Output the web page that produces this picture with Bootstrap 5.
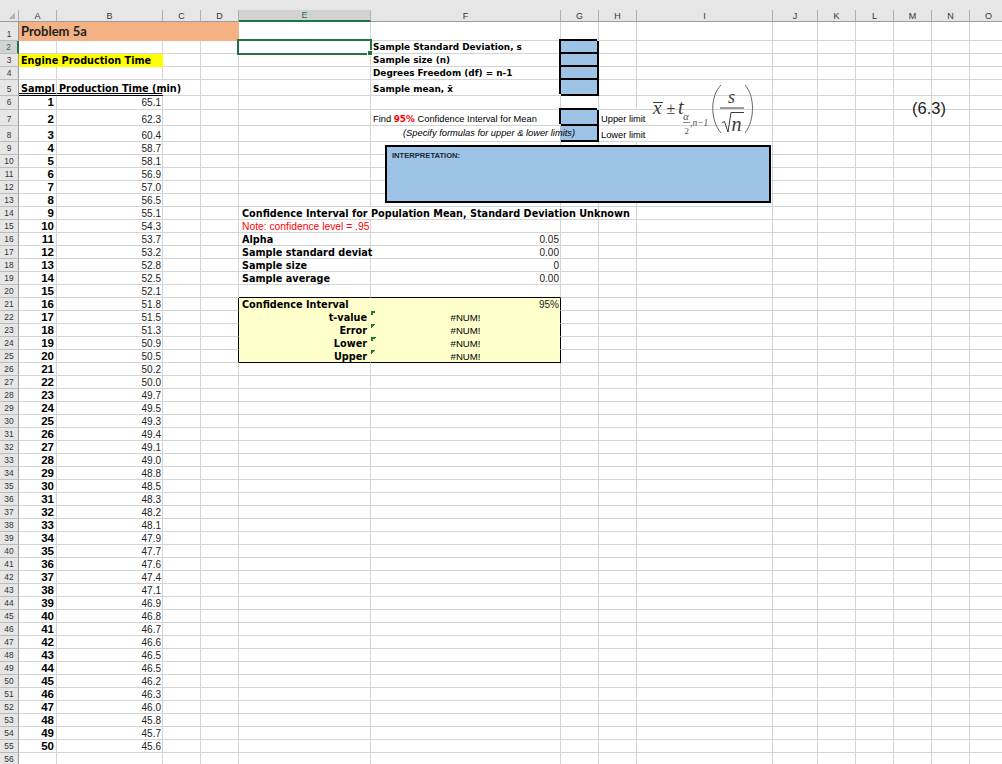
<!DOCTYPE html>
<html lang="en"><head><meta charset="utf-8"><title>Problem 5a</title>
<link rel="stylesheet" href="https://cdn.jsdelivr.net/npm/bootstrap@5.3.0/dist/css/bootstrap.min.css">
<style>
html,body{height:764px;overflow:hidden;background:#fff}
.sheet{width:1002px;height:764px;overflow:hidden;padding-top:10px;background:#e6e6e6}
table.xl.table{width:1007px;table-layout:fixed;border-collapse:separate;border-spacing:0;margin:0;background:#fff;border:0;color:#000;font-family:"Liberation Sans",Arial,sans-serif;font-size:10px}
table.xl.table>*>tr>*{padding:0;height:13px;line-height:11px;vertical-align:bottom;white-space:nowrap;overflow:visible;border-style:solid;border-width:0 1px 1px 0;border-color:#d4d4d4;background:transparent;box-shadow:none;color:#000}
table.xl.table>thead>tr>th{height:12px;padding:0;background:#e6e6e6;font-weight:400;font-size:9px;line-height:9px;text-align:center;color:#333;border-color:#b0b0b0;border-bottom-color:#9b9b9b}
table.xl.table>thead>tr>th.corner{background:linear-gradient(135deg,transparent 50%,#b4b4b4 50%) right 3px bottom 2px/6px 6px no-repeat #e6e6e6}
table.xl.table>thead>tr>th.cur{background:#d2d2d2;color:#217346;border-bottom:2px solid #217346}
table.xl.table>tbody>tr>th{background:#e6e6e6;font-weight:400;font-size:8.4px;line-height:11px;text-align:center;color:#333;border-color:#bcbcbc;border-right-color:#9b9b9b}
table.xl.table>tbody>tr>th.cur{background:#d2d2d2;color:#217346;border-right:2px solid #217346}
table.xl.table>tbody>tr.h19>*{height:19px}
table.xl.table>tbody>tr.h14>*{height:14px;padding-bottom:1px}
table.xl.table>tbody>tr.h16>*{height:16px}
table.xl.table>tbody>tr>td.num{text-align:right;padding-right:1px;font-size:10px;color:#222}
table.xl.table>tbody>tr>td.idx{text-align:right;padding-right:2px;font-weight:700;font-size:11.5px;line-height:11px}
table.xl.table>tbody>tr>td.lbl{font-family:"DejaVu Sans",Verdana,sans-serif;font-weight:700;font-size:8.9px;padding-left:2px}
table.xl.table>tbody>tr>td.wide{font-family:"DejaVu Sans",Verdana,sans-serif;font-weight:700;font-size:9.7px;padding-left:2px}
table.xl.table>tbody>tr>td.ctr{font-family:"DejaVu Sans",Verdana,sans-serif;font-weight:700;font-size:9.7px;padding-left:3px}
table.xl.table>tbody>tr>td.thin{padding-left:2px;font-size:9.3px}
table.xl.table>tbody>tr>td.ital{padding-left:32px;padding-bottom:2px;font-size:9.3px;font-style:italic}
table.xl.table>tbody>tr>td.over{border-right-color:#fff}
table.xl.table>tbody>tr>td.title{background:#f4b183;border-color:#f4b183;font-family:Lato,sans-serif;font-weight:700;font-size:13px;padding:0 0 1px 2px;line-height:16px;vertical-align:middle;color:#222}
table.xl.table>tbody>tr>td.hilite{background:#ff0;border-color:#ff0}
table.xl.table>tbody>tr>td.dbl{border-bottom:3px double #000;line-height:9px}
table.xl.table>tbody>tr>td.blu{background:#9dc3e6;border-right:2px solid #000;border-bottom:2px solid #000;box-shadow:-2px -2px 0 #000}
table.xl.table>tbody>tr>td.blu2{background:#9dc3e6;border-right:2px solid #000;border-bottom:2px solid #000}
table.xl.table>tbody>tr>td.tolim{border-right-color:#9dc3e6}
table.xl.table>tbody>tr>td.red{color:#f00;padding-left:3px;font-size:10.3px}
table.xl.table>tbody>tr>td.kb{border-bottom-color:#000}
table.xl.table>tbody>tr>td.kr{border-right-color:#000}
table.xl.table>tbody>tr>td.cream{background:#ffc;border-color:#ffc}
table.xl.table>tbody>tr>td.cream.er{border-right-color:#000}
table.xl.table>tbody>tr>td.cream.eb{border-bottom-color:#000}
table.xl.table>tbody>tr>td.rgt{text-align:right;padding-right:3px}
table.xl.table>tbody>tr>td.nm{text-align:center;font-size:9.6px;background:linear-gradient(135deg,#1c7f1c 50%,transparent 50%) 0 0/5px 5px no-repeat #ffc}
.hot{color:#f00;font-family:"DejaVu Sans",sans-serif;font-weight:700;font-size:8.9px}
.overlay-sel{position:absolute;left:237px;top:39px;width:135px;height:16px;border:2px solid #217346}
.overlay-sel i{position:absolute;right:-3px;bottom:-3px;width:6px;height:6px;background:#217346;border:1px solid #fff}
.overlay-box{position:absolute;left:385px;top:145px;width:386px;height:58px;background:#9dc3e6;border:2px solid #000;padding:4px 5px;font:700 7.6px/10px "Liberation Sans",Arial,sans-serif;color:#1c2733}
.overlay-eq{position:absolute;left:912px;top:98px;font:16.5px/20px "Liberation Sans",Arial,sans-serif;color:#222}
.overlay-fm{position:absolute;left:650px;top:82px;width:106px;height:56px}
.overlay-fm text{font-family:"Liberation Serif","Times New Roman",serif;fill:#3a3a3a}
.overlay-fm text.sub{fill:#555}
</style></head><body>
<div class="sheet position-relative">
<table class="table xl mb-0">
<colgroup><col style="width:19px"><col style="width:38px"><col style="width:106px"><col style="width:38px"><col style="width:38px"><col style="width:132px"><col style="width:190px"><col style="width:38px"><col style="width:38px"><col style="width:136px"><col style="width:45px"><col style="width:38px"><col style="width:38px"><col style="width:38px"><col style="width:38px"><col style="width:38px"></colgroup>
<thead><tr><th class="corner"></th><th>A</th><th>B</th><th>C</th><th>D</th><th class="cur">E</th><th>F</th><th>G</th><th>H</th><th>I</th><th>J</th><th>K</th><th>L</th><th>M</th><th>N</th><th>O</th></tr></thead>
<tbody>
<tr class="h19"><th>1</th><td colspan="4" class="title">Problem 5a</td><td><td><td><td><td><td><td><td><td><td><td></tr>
<tr><th class="cur">2</th><td><td><td><td><td><td class="lbl">Sample Standard Deviation, s</td><td class="blu"></td><td><td><td><td><td><td><td><td></tr>
<tr><th>3</th><td colspan="2" class="wide hilite">Engine Production Time</td><td><td><td><td class="lbl">Sample size (n)</td><td class="blu"></td><td><td><td><td><td><td><td><td></tr>
<tr><th>4</th><td><td><td><td><td><td class="lbl">Degrees Freedom (df) = n-1</td><td class="blu"></td><td><td><td><td><td><td><td><td></tr>
<tr class="h16"><th>5</th><td class="wide dbl">Sampl</td><td class="wide dbl over">Production Time (min)</td><td><td><td><td class="lbl">Sample mean, x̄</td><td class="blu"></td><td><td><td><td><td><td><td><td></tr>
<tr class="h14"><th>6</th><td class="idx">1</td><td class="num">65.1</td><td><td><td><td><td><td><td><td><td><td><td><td><td></tr>
<tr class="h16"><th>7</th><td class="idx">2</td><td class="num">62.3</td><td><td><td><td class="thin">Find <span class="hot">95%</span> Confidence Interval for Mean</td><td class="blu"></td><td class="thin over">Upper limit</td><td><td><td><td><td><td><td></tr>
<tr class="h16"><th>8</th><td class="idx">3</td><td class="num">60.4</td><td><td><td><td class="ital tolim">(Specify formulas for upper &amp; lower limits)</td><td class="blu2"></td><td class="thin over">Lower limit</td><td><td><td><td><td><td><td></tr>
<tr><th>9</th><td class="idx">4</td><td class="num">58.7</td><td><td><td><td><td><td><td><td><td><td><td><td><td></tr>
<tr><th>10</th><td class="idx">5</td><td class="num">58.1</td><td><td><td><td><td><td><td><td><td><td><td><td><td></tr>
<tr><th>11</th><td class="idx">6</td><td class="num">56.9</td><td><td><td><td><td><td><td><td><td><td><td><td><td></tr>
<tr><th>12</th><td class="idx">7</td><td class="num">57.0</td><td><td><td><td><td><td><td><td><td><td><td><td><td></tr>
<tr><th>13</th><td class="idx">8</td><td class="num">56.5</td><td><td><td><td><td><td><td><td><td><td><td><td><td></tr>
<tr><th>14</th><td class="idx">9</td><td class="num">55.1</td><td><td><td class="ctr over">Confidence Interval for Population Mean, Standard Deviation Unknown</td><td><td><td><td><td><td><td><td><td><td></tr>
<tr><th>15</th><td class="idx">10</td><td class="num">54.3</td><td><td><td class="red">Note: confidence level = .95</td><td><td><td><td><td><td><td><td><td><td></tr>
<tr><th>16</th><td class="idx">11</td><td class="num">53.7</td><td><td><td class="ctr">Alpha</td><td class="num">0.05</td><td><td><td><td><td><td><td><td><td></tr>
<tr><th>17</th><td class="idx">12</td><td class="num">53.2</td><td><td><td class="ctr">Sample standard deviat</td><td class="num">0.00</td><td><td><td><td><td><td><td><td><td></tr>
<tr><th>18</th><td class="idx">13</td><td class="num">52.8</td><td><td><td class="ctr">Sample size</td><td class="num">0</td><td><td><td><td><td><td><td><td><td></tr>
<tr><th>19</th><td class="idx">14</td><td class="num">52.5</td><td><td><td class="ctr">Sample average</td><td class="num">0.00</td><td><td><td><td><td><td><td><td><td></tr>
<tr><th>20</th><td class="idx">15</td><td class="num">52.1</td><td><td><td class="kb"></td><td class="kb"></td><td><td><td><td><td><td><td><td><td></tr>
<tr><th>21</th><td class="idx">16</td><td class="num">51.8</td><td><td class="kr"></td><td class="ctr cream">Confidence Interval</td><td class="num cream er">95%</td><td><td><td><td><td><td><td><td><td></tr>
<tr><th>22</th><td class="idx">17</td><td class="num">51.5</td><td><td class="kr"></td><td class="ctr cream rgt">t-value</td><td class="nm cream er">#NUM!</td><td><td><td><td><td><td><td><td><td></tr>
<tr><th>23</th><td class="idx">18</td><td class="num">51.3</td><td><td class="kr"></td><td class="ctr cream rgt">Error</td><td class="nm cream er">#NUM!</td><td><td><td><td><td><td><td><td><td></tr>
<tr><th>24</th><td class="idx">19</td><td class="num">50.9</td><td><td class="kr"></td><td class="ctr cream rgt">Lower</td><td class="nm cream er">#NUM!</td><td><td><td><td><td><td><td><td><td></tr>
<tr><th>25</th><td class="idx">20</td><td class="num">50.5</td><td><td class="kr"></td><td class="ctr cream eb rgt">Upper</td><td class="nm cream er eb">#NUM!</td><td><td><td><td><td><td><td><td><td></tr>
<tr><th>26</th><td class="idx">21</td><td class="num">50.2</td><td><td><td><td><td><td><td><td><td><td><td><td><td></tr>
<tr><th>27</th><td class="idx">22</td><td class="num">50.0</td><td><td><td><td><td><td><td><td><td><td><td><td><td></tr>
<tr><th>28</th><td class="idx">23</td><td class="num">49.7</td><td><td><td><td><td><td><td><td><td><td><td><td><td></tr>
<tr><th>29</th><td class="idx">24</td><td class="num">49.5</td><td><td><td><td><td><td><td><td><td><td><td><td><td></tr>
<tr><th>30</th><td class="idx">25</td><td class="num">49.3</td><td><td><td><td><td><td><td><td><td><td><td><td><td></tr>
<tr><th>31</th><td class="idx">26</td><td class="num">49.4</td><td><td><td><td><td><td><td><td><td><td><td><td><td></tr>
<tr><th>32</th><td class="idx">27</td><td class="num">49.1</td><td><td><td><td><td><td><td><td><td><td><td><td><td></tr>
<tr><th>33</th><td class="idx">28</td><td class="num">49.0</td><td><td><td><td><td><td><td><td><td><td><td><td><td></tr>
<tr><th>34</th><td class="idx">29</td><td class="num">48.8</td><td><td><td><td><td><td><td><td><td><td><td><td><td></tr>
<tr><th>35</th><td class="idx">30</td><td class="num">48.5</td><td><td><td><td><td><td><td><td><td><td><td><td><td></tr>
<tr><th>36</th><td class="idx">31</td><td class="num">48.3</td><td><td><td><td><td><td><td><td><td><td><td><td><td></tr>
<tr><th>37</th><td class="idx">32</td><td class="num">48.2</td><td><td><td><td><td><td><td><td><td><td><td><td><td></tr>
<tr><th>38</th><td class="idx">33</td><td class="num">48.1</td><td><td><td><td><td><td><td><td><td><td><td><td><td></tr>
<tr><th>39</th><td class="idx">34</td><td class="num">47.9</td><td><td><td><td><td><td><td><td><td><td><td><td><td></tr>
<tr><th>40</th><td class="idx">35</td><td class="num">47.7</td><td><td><td><td><td><td><td><td><td><td><td><td><td></tr>
<tr><th>41</th><td class="idx">36</td><td class="num">47.6</td><td><td><td><td><td><td><td><td><td><td><td><td><td></tr>
<tr><th>42</th><td class="idx">37</td><td class="num">47.4</td><td><td><td><td><td><td><td><td><td><td><td><td><td></tr>
<tr><th>43</th><td class="idx">38</td><td class="num">47.1</td><td><td><td><td><td><td><td><td><td><td><td><td><td></tr>
<tr><th>44</th><td class="idx">39</td><td class="num">46.9</td><td><td><td><td><td><td><td><td><td><td><td><td><td></tr>
<tr><th>45</th><td class="idx">40</td><td class="num">46.8</td><td><td><td><td><td><td><td><td><td><td><td><td><td></tr>
<tr><th>46</th><td class="idx">41</td><td class="num">46.7</td><td><td><td><td><td><td><td><td><td><td><td><td><td></tr>
<tr><th>47</th><td class="idx">42</td><td class="num">46.6</td><td><td><td><td><td><td><td><td><td><td><td><td><td></tr>
<tr><th>48</th><td class="idx">43</td><td class="num">46.5</td><td><td><td><td><td><td><td><td><td><td><td><td><td></tr>
<tr><th>49</th><td class="idx">44</td><td class="num">46.5</td><td><td><td><td><td><td><td><td><td><td><td><td><td></tr>
<tr><th>50</th><td class="idx">45</td><td class="num">46.2</td><td><td><td><td><td><td><td><td><td><td><td><td><td></tr>
<tr><th>51</th><td class="idx">46</td><td class="num">46.3</td><td><td><td><td><td><td><td><td><td><td><td><td><td></tr>
<tr><th>52</th><td class="idx">47</td><td class="num">46.0</td><td><td><td><td><td><td><td><td><td><td><td><td><td></tr>
<tr><th>53</th><td class="idx">48</td><td class="num">45.8</td><td><td><td><td><td><td><td><td><td><td><td><td><td></tr>
<tr><th>54</th><td class="idx">49</td><td class="num">45.7</td><td><td><td><td><td><td><td><td><td><td><td><td><td></tr>
<tr><th>55</th><td class="idx">50</td><td class="num">45.6</td><td><td><td><td><td><td><td><td><td><td><td><td><td></tr>
<tr><th>56</th><td><td><td><td><td><td><td><td><td><td><td><td><td><td><td></tr>
</tbody></table>
<div class="overlay-sel"><i></i></div>
<div class="overlay-box">INTERPRETATION:</div>
<svg class="overlay-fm" viewBox="0 0 106 56" aria-label="formula">
<text x="3" y="32" font-size="19" font-style="italic">x</text>
<path d="M3 20.500H13" stroke="#3a3a3a" fill="none"/>
<text x="16.500" y="32" font-size="16">±</text>
<text x="28" y="32" font-size="20" font-style="italic">t</text>
<text x="33" y="38" font-size="11" class="sub" font-style="italic">α</text>
<path d="M33 40.500H40" stroke="#888" fill="none"/>
<text x="34.500" y="52" font-size="9" class="sub">2</text>
<text x="40" y="44" font-size="9.500" class="sub" font-style="italic">,n−1</text>
<path d="M71 3C60 14 60 38 71 51M95 3C105 14 105 38 95 51" stroke="#666" stroke-width="1" fill="none"/>
<text x="78" y="21" font-size="18" font-style="italic">s</text>
<path d="M70 26H94" stroke="#3a3a3a" fill="none"/>
<path d="M72 41L74.500 39.500L78 50L81 30.500H94" stroke="#3a3a3a" fill="none"/>
<text x="81.500" y="49" font-size="20" font-style="italic">n</text>
</svg>
<div class="overlay-eq">(6.3)</div>
</div>
<script src="https://cdn.jsdelivr.net/npm/bootstrap@5.3.0/dist/js/bootstrap.bundle.min.js"></script>
</body></html>
